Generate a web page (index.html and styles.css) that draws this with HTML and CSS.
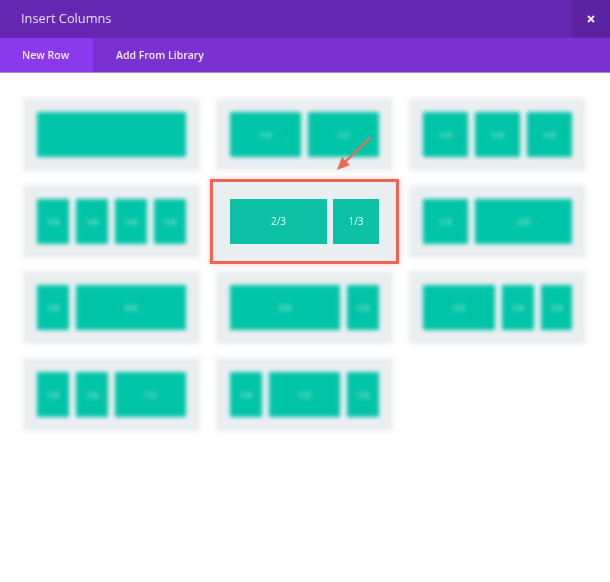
FILE: index.html
```html
<!DOCTYPE html>
<html lang="en">
<head>
<meta charset="utf-8">
<title>Insert Columns</title>
<link rel="stylesheet" href="styles.css">
</head>
<body>
<div class="modal">
  <header class="head">
    <h1 class="title">Insert Columns</h1>
    <button class="close" aria-label="Close"><svg viewBox="0 0 8 8" width="8" height="8"><path d="M1 1 7 7M7 1 1 7" stroke="#f1e9fb" stroke-width="1.9" fill="none"/></svg></button>
  </header>
  <nav class="tabs">
    <a class="tab active">New Row</a>
    <a class="tab">Add From Library</a>
  </nav>
  <main class="grid">
    <div class="card"><div class="col f1"></div></div>
    <div class="card"><div class="col f1">1/2</div><div class="col f1">1/2</div></div>
    <div class="card"><div class="col f1">1/3</div><div class="col f1">1/3</div><div class="col f1">1/3</div></div>
    <div class="card"><div class="col f1">1/4</div><div class="col f1">1/4</div><div class="col f1">1/4</div><div class="col f1">1/4</div></div>
    <div class="card selected"><div class="col w97">2/3</div><div class="col f1">1/3</div></div>
    <div class="card"><div class="col w45">1/3</div><div class="col f1">2/3</div></div>
    <div class="card"><div class="col w32">1/4</div><div class="col f1">3/4</div></div>
    <div class="card"><div class="col f1">3/4</div><div class="col w32">1/4</div></div>
    <div class="card"><div class="col w72">1/2</div><div class="col w32">1/4</div><div class="col f1">1/4</div></div>
    <div class="card"><div class="col w32">1/4</div><div class="col w32">1/4</div><div class="col f1">1/2</div></div>
    <div class="card"><div class="col w32">1/4</div><div class="col f1">1/2</div><div class="col w32">1/4</div></div>
  </main>
  <svg class="arrow" viewBox="0 0 40 40" width="40" height="40"><path d="M36 3 9 29" stroke="#ea6a55" stroke-width="2.4" fill="none"/><path d="M2 36 7 23 15 31Z" fill="#ea6a55"/></svg>
</div>
</body>
</html>
```
FILE: styles.css
```css
* { box-sizing: border-box; }
html, body { margin: 0; padding: 0; background: #fff; }
body { font-family: "Open Sans", "Liberation Sans", sans-serif; }
.modal { position: relative; width: 610px; height: 582px; overflow: hidden; }
.head { display: flex; align-items: stretch; justify-content: space-between; height: 38px; background: #6526b2; }
.title { margin: 0; padding-left: 21px; font-size: 12.8px; font-weight: 400; line-height: 36px; color: #eadff7; filter: blur(.4px); }
.close { width: 38px; border: 0; padding: 0; background: #5b23a1; display: flex; align-items: center; justify-content: center; filter: blur(.4px); }
.tabs { display: flex; height: 35px; background: #7a31d1; border-bottom: 1px solid #a58ac9; }
.tab { display: block; height: 34px; font-size: 10.5px; font-weight: 600; line-height: 35px; color: #f3ecfb; padding: 0 23px; filter: blur(.4px); }
.tab.active { width: 93px; background: #8a3aed; padding: 0 0 0 22px; }
.grid { display: grid; grid-template-columns: repeat(3, 177px); grid-auto-rows: 73px; column-gap: 16px; row-gap: 13.67px; padding: 25px 0 0 23px; }
.card { display: flex; gap: 7px; padding: 14px; background: #ebeef1; filter: blur(2px); }
.col { display: flex; align-items: center; justify-content: center; min-width: 0; background: #00c4a7; color: #9ce6d8; font-size: 8px; font-weight: 600; border-radius: 1px; }
.f1 { flex: 1; }
.w97 { width: 97px; }
.w72 { width: 72px; }
.w45 { width: 45px; }
.w32 { width: 32px; }
.selected { position: relative; z-index: 1; filter: blur(.35px); gap: 6px; box-shadow: 0 0 0 3px #ebeef1, 0 0 0 6px #ee6352, 0 0 5px 7px rgba(238, 99, 82, .25); }
.selected .col { background: #0cc0a5; color: #eefbf8; font-size: 10px; font-weight: 400; border-radius: 0; }
.arrow { position: absolute; left: 335px; top: 134px; z-index: 2; filter: blur(.4px); }
```
